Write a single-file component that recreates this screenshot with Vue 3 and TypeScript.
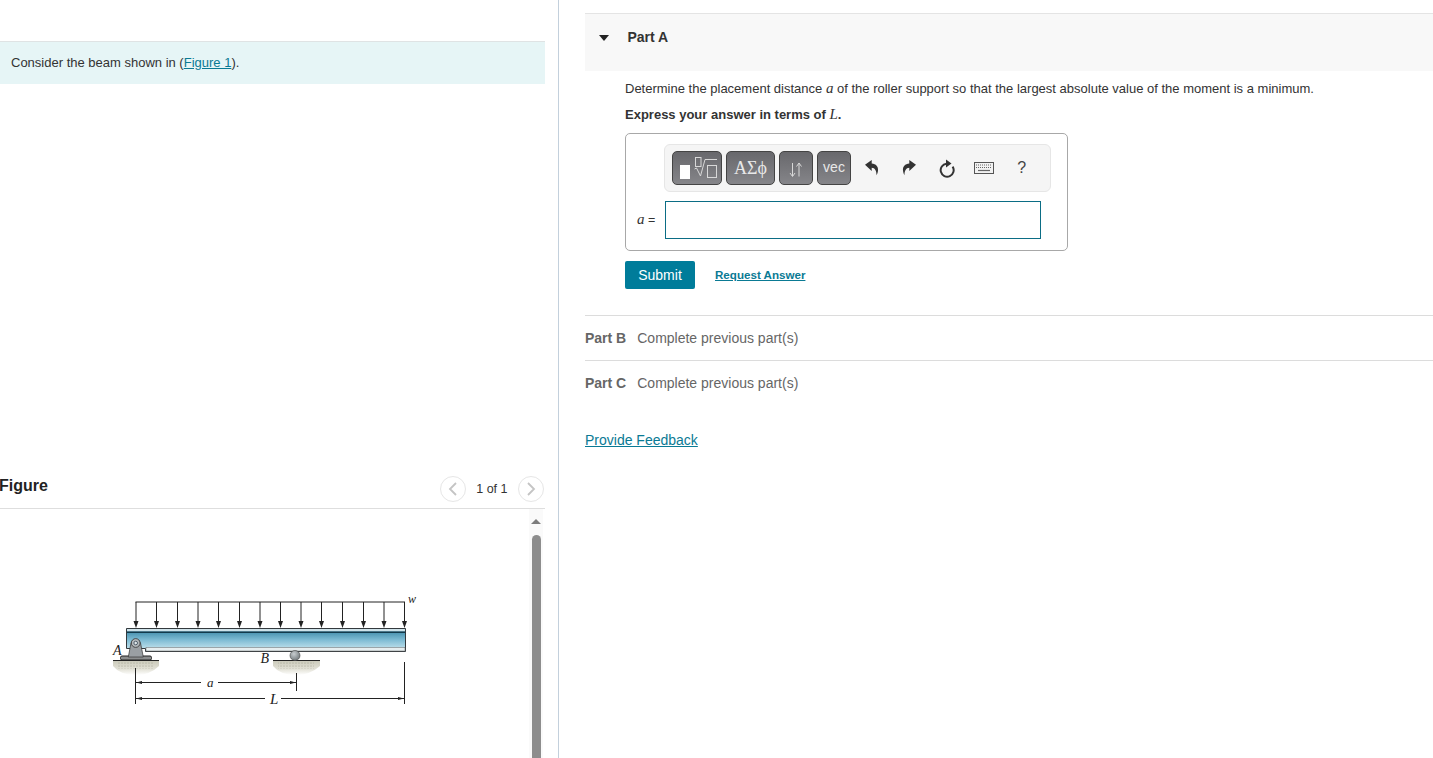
<template>
  <div class="page">
    <!-- Left column -->
    <aside class="left">
      <div class="intro">
        Consider the beam shown in (<a href="#" class="link">Figure 1</a>).
      </div>

      <div class="figure-head">
        <h2>Figure</h2>
        <div class="pager">
          <button class="round">
            <svg width="10" height="14" viewBox="0 0 10 14"><path d="M8 1 L2 7 L8 13" /></svg>
          </button>
          <span>1 of 1</span>
          <button class="round">
            <svg width="10" height="14" viewBox="0 0 10 14"><path d="M2 1 L8 7 L2 13" /></svg>
          </button>
        </div>
      </div>

      <div class="figure-body">
        <div class="figure-pic">
          <svg width="320" height="120" viewBox="0 0 320 120">
            <defs>
              <linearGradient id="beamFill" x1="0" y1="0" x2="0" y2="1">
                <stop offset="0" stop-color="#2f7f9f" />
                <stop offset="0.5" stop-color="#7fbcd4" />
                <stop offset="1" stop-color="#d3ecf3" />
              </linearGradient>
              <radialGradient id="ballFill" cx="0.4" cy="0.35" r="0.7">
                <stop offset="0" stop-color="#c8cdd0" />
                <stop offset="1" stop-color="#6f7679" />
              </radialGradient>
              <linearGradient id="groundFill" x1="0" y1="0" x2="0" y2="1">
                <stop offset="0" stop-color="#c9c8b8" />
                <stop offset="0.6" stop-color="#e2e1d6" />
                <stop offset="1" stop-color="#ffffff" />
              </linearGradient>
              <pattern id="stipple" width="3" height="3" patternUnits="userSpaceOnUse">
                <circle cx="1" cy="1" r="0.5" fill="#8f8e80" />
              </pattern>
            </defs>

            <!-- distributed load -->
            <line x1="35.5" y1="12" x2="305" y2="12" class="thin" />
            <g v-for="x in arrows" :key="x">
              <line :x1="x" y1="12" :x2="x" y2="34" class="thin" />
              <path :d="`M${x - 2.5} 31 L${x + 2.5} 31 L${x} 38 Z`" fill="#222" />
            </g>

            <!-- ground -->
            <path d="M13 70 H59 V76 Q50 85 36 85 Q20 85 13 76 Z" fill="url(#groundFill)" />
            <path d="M173 70 H220 V76 Q210 85 196 85 Q180 85 173 76 Z" fill="url(#groundFill)" />
            <rect x="18" y="72" width="36" height="7" fill="url(#stipple)" />
            <rect x="178" y="72" width="36" height="7" fill="url(#stipple)" />
            <line x1="13" y1="70.5" x2="59" y2="70.5" class="mid" />
            <line x1="173" y1="70.5" x2="220" y2="70.5" class="mid" />

            <!-- beam -->
            <path d="M26.5 38.5 H305.5 V61.5 H45.5 V58.5 H26.5 Z" fill="url(#beamFill)" stroke="#33393d" />
            <rect x="27" y="39" width="278" height="2.5" fill="#cfe3ea" />
            <rect x="27" y="41.5" width="278" height="1.5" fill="#123a4c" />
            <rect x="46" y="57.5" width="259" height="3.5" fill="#e6eef0" stroke="#666" stroke-width="0.5" />

            <!-- pin A -->
            <rect x="20.5" y="66" width="31" height="4" rx="1.5" fill="#8b8d8e" stroke="#222" stroke-width="1" />
            <path d="M28.3 67 L31 53 A5 5 0 0 1 40.5 53 L43.3 67 Z" fill="#9a9fa3" stroke="#333" stroke-width="0.7" />
            <circle cx="35.7" cy="53" r="4.4" fill="#b2b7ba" stroke="#333" stroke-width="0.8" />
            <circle cx="35.7" cy="53" r="1.8" fill="#dfe7ea" stroke="#234" stroke-width="0.7" />

            <!-- roller B -->
            <circle cx="195" cy="65.5" r="5" fill="url(#ballFill)" stroke="#444" stroke-width="0.6" />

            <!-- dimensions -->
            <line x1="35.5" y1="78" x2="35.5" y2="114" class="thin" />
            <line x1="196.5" y1="83" x2="196.5" y2="101" class="thin" />
            <line x1="304.5" y1="72" x2="304.5" y2="114" class="thin" />

            <line x1="36" y1="92.5" x2="101" y2="92.5" class="thin" />
            <line x1="118" y1="92.5" x2="196" y2="92.5" class="thin" />
            <path d="M36 92.5 L42 91 V94 Z M196 92.5 L190 91 V94 Z" fill="#222" />

            <line x1="36" y1="108.5" x2="165" y2="108.5" class="thin" />
            <line x1="181" y1="108.5" x2="304" y2="108.5" class="thin" />
            <path d="M36 108.5 L42 107 V110 Z M304 108.5 L298 107 V110 Z" fill="#222" />

            <text x="13" y="65" class="lbl">A</text>
            <text x="160.5" y="73" class="lbl">B</text>
            <text x="107" y="97" class="lbl mid-size">a</text>
            <text x="170" y="114" class="lbl big">L</text>
            <text x="308" y="13" class="lbl small">w</text>
          </svg>
        </div>
        <div class="scrollbar">
          <span class="scroll-up"></span>
          <span class="scroll-thumb"></span>
        </div>
      </div>
    </aside>

    <!-- Right column -->
    <main class="right">
      <section class="part-a">
        <header class="part-head">
          <span class="caret"></span>
          <span class="part-title">Part A</span>
        </header>

        <div class="part-body">
          <p class="question">
            Determine the placement distance <i class="math">a</i> of the roller support so that the largest absolute value of the moment is a minimum.
          </p>
          <p class="express">Express your answer in terms of <i class="math">L</i>.</p>

          <div class="answer">
            <div class="toolbar">
              <button class="tool tool-templates">
                <span class="solid"></span>
                <svg width="29" height="27" viewBox="0 0 29 27">
                  <rect x="3.5" y="2.5" width="5.5" height="9" class="ghost" />
                  <path d="M2.5 14 L4.5 13 L8.5 21 L13 4.5 H25" class="ghost" />
                  <rect x="15.5" y="10.5" width="9" height="12" class="ghost" />
                </svg>
              </button>
              <button class="tool tool-greek">ΑΣϕ</button>
              <button class="tool tool-arrows">
                <svg width="14" height="16" viewBox="0 0 14 16">
                  <path d="M3.5 1 V14 M1 11 L3.5 14.5 L6 11" class="ghost" />
                  <path d="M10 14.5 V1 M7.5 4.5 L10 1 L12.5 4.5" class="ghost" />
                </svg>
              </button>
              <button class="tool tool-vec">vec</button>

              <span class="action">
                <svg width="14" height="16" viewBox="0 0 14 16">
                  <path :d="undoPath" fill="#333" />
                </svg>
              </span>
              <span class="action">
                <svg width="14" height="16" viewBox="0 0 14 16">
                  <path :d="undoPath" fill="#333" transform="translate(14 0) scale(-1 1)" />
                </svg>
              </span>
              <span class="action">
                <svg width="18" height="20" viewBox="0 0 18 20">
                  <path d="M8.5 5.7 A6.5 6.5 0 1 0 14.6 8.6" fill="none" stroke="#333" stroke-width="2" />
                  <path d="M8 1.5 V9.5 L13.5 5.5 Z" fill="#333" />
                </svg>
              </span>
              <span class="action">
                <svg width="20" height="12" viewBox="0 0 20 12">
                  <rect x="0.5" y="0.5" width="19" height="11" fill="#f2f2f2" stroke="#555" />
                  <path d="M2 3 H18 M2 5.5 H18" stroke="#666" stroke-width="1.2" stroke-dasharray="1 1" />
                  <path d="M4 8.5 H16" stroke="#666" stroke-width="1.2" />
                </svg>
              </span>
              <span class="action help">?</span>
            </div>

            <div class="answer-row">
              <span class="answer-label"><i class="math">a</i> =</span>
              <input class="answer-input" type="text" />
            </div>
          </div>

          <div class="actions">
            <button class="submit">Submit</button>
            <a href="#" class="link request">Request Answer</a>
          </div>
        </div>
      </section>

      <div v-for="p in lockedParts" :key="p" class="locked">
        <strong>{{ p }}</strong>
        <span>Complete previous part(s)</span>
      </div>

      <a href="#" class="link feedback">Provide Feedback</a>
    </main>
  </div>
</template>

<script setup lang="ts">
// Load arrows along the beam
const arrows: number[] = [36, 56.5, 77.5, 98, 118.5, 139.5, 160, 180.5, 201, 221.5, 242.5, 263.5, 284, 304.5];

const lockedParts: string[] = ['Part B', 'Part C'];

// Same outline for undo and (mirrored) redo
const undoPath = 'M0 4.7 L6.7 0 V3.4 C11 3.6 13.5 6.5 13 10.5 C12.8 12.5 12.2 14 11.5 15.2 C11.6 11 10 7.8 6.7 7.8 V11 Z';
</script>

<style>
html,
body {
  margin: 0;
  overflow: hidden;
  background: #fff;
}
</style>

<style scoped>
.page {
  display: flex;
  width: 1433px;
  height: 758px;
  overflow: hidden;
  font-family: "Liberation Sans", Arial, sans-serif;
  font-size: 13px;
  color: #333;
}

.left {
  flex: none;
  width: 559px;
  height: 758px;
  padding-top: 41px;
  box-sizing: border-box;
  border-right: 1px solid #c3d0dc;
}

.intro {
  width: 545px;
  height: 43px;
  box-sizing: border-box;
  padding: 13px 0 0 11px;
  line-height: 16px;
  background: #e6f5f6;
  border-top: 1px solid #dfe3e4;
}

.link {
  color: #0a7a94;
  text-decoration: underline;
}

.figure-head {
  width: 545px;
  height: 34px;
  box-sizing: border-box;
  margin-top: 391px;
  display: flex;
  justify-content: space-between;
  align-items: flex-start;
  border-bottom: 1px solid #dedede;
}

.figure-head h2 {
  margin: 2px 0 0 -1px;
  font-size: 16px;
  line-height: 18px;
  font-weight: bold;
  color: #222;
}

.pager {
  display: flex;
  align-items: center;
  gap: 10.5px;
  margin: 1px 1px 0 0;
  font-size: 12.5px;
  color: #333;
}

.round {
  width: 26px;
  height: 26px;
  padding: 0;
  border: 1px solid #e6e6e6;
  border-radius: 50%;
  background: #fff;
  display: flex;
  align-items: center;
  justify-content: center;
}

.round svg path {
  fill: none;
  stroke: #c4c4c4;
  stroke-width: 1.8;
}

.figure-body {
  width: 545px;
  display: flex;
  justify-content: space-between;
}

.figure-pic {
  padding: 81px 0 0 100px;
}

.figure-pic svg {
  display: block;
}

.thin {
  stroke: #222;
  stroke-width: 1;
}

.mid {
  stroke: #222;
  stroke-width: 1;
}

.lbl {
  font-family: "Liberation Serif", serif;
  font-style: italic;
  font-size: 14px;
  fill: #222;
}

.lbl.big {
  font-size: 15px;
}

.lbl.mid-size {
  font-size: 13px;
}

.lbl.small {
  font-size: 12px;
}

.scrollbar {
  width: 14px;
  height: 249px;
  box-sizing: border-box;
  margin-right: 2px;
  padding-top: 10px;
  background: #fafafa;
  display: flex;
  flex-direction: column;
  align-items: center;
}

.scroll-up {
  width: 0;
  height: 0;
  border-left: 5px solid transparent;
  border-right: 5px solid transparent;
  border-bottom: 5px solid #7d7d7d;
}

.scroll-thumb {
  width: 9px;
  flex: 1;
  margin-top: 11px;
  background: #8d8d8d;
  border-radius: 5px 5px 0 0;
}

.right {
  flex: 1;
  min-width: 0;
  padding: 13px 0 0 26px;
}

.part-head {
  display: flex;
  align-items: flex-start;
  height: 58px;
  box-sizing: border-box;
  padding-top: 15px;
  background: #f8f8f8;
  border-top: 1px solid #e4e4e4;
}

.caret {
  width: 0;
  height: 0;
  margin: 6px 0 0 14px;
  border-left: 5.5px solid transparent;
  border-right: 5.5px solid transparent;
  border-top: 6px solid #222;
}

.part-title {
  margin-left: 18.5px;
  font-weight: bold;
  font-size: 14px;
  line-height: 16px;
  color: #333;
}

.part-body {
  padding: 10px 0 0 40px;
}

.question,
.express {
  margin: 0;
  line-height: 16px;
}

.express {
  margin-top: 10px;
  font-weight: bold;
}

.math {
  font-family: "Liberation Serif", serif;
  font-size: 15px;
  font-style: italic;
  font-weight: normal;
  line-height: 0;
}

.answer {
  width: 443px;
  height: 118px;
  box-sizing: border-box;
  margin-top: 10px;
  padding: 10px 0 0 38px;
  border: 1px solid #a8a8a8;
  border-radius: 5px;
}

.toolbar {
  width: 387px;
  height: 48px;
  box-sizing: border-box;
  display: flex;
  align-items: center;
  padding-left: 7px;
  gap: 4px;
  background: #f5f5f5;
  border: 1px solid #e6e6e6;
  border-radius: 6px;
}

.tool {
  flex: none;
  height: 34px;
  padding: 0;
  box-sizing: border-box;
  display: flex;
  align-items: center;
  justify-content: center;
  color: #fff;
  background: linear-gradient(#68686c, #858589);
  border: 1px solid #444;
  border-radius: 5px;
}

.tool-templates {
  width: 50px;
  justify-content: flex-start;
  padding-left: 7px;
  gap: 2px;
}

.solid {
  width: 10px;
  height: 14px;
  margin-top: 7px;
  background: #fff;
}

.ghost {
  fill: none;
  stroke: #d8d8d8;
  stroke-width: 1;
}

.tool-greek {
  width: 49px;
  font-family: "Liberation Serif", serif;
  font-size: 18px;
  color: #e8e8e8;
}

.tool-arrows {
  width: 34px;
  padding-top: 3px;
}

.tool-vec {
  width: 34px;
  font-family: "Liberation Sans", sans-serif;
  font-size: 14px;
  color: #e8e8e8;
  padding-bottom: 3px;
}

.action {
  flex: none;
  width: 33.5px;
  display: flex;
  justify-content: center;
  align-items: center;
}

.help {
  font-size: 16px;
  color: #444;
}

.answer-row {
  display: flex;
  align-items: center;
  margin-top: 9px;
  margin-left: -27px;
}

.answer-label {
  width: 28px;
  flex: none;
  font-size: 12.5px;
}

.answer-input {
  width: 376px;
  height: 38px;
  box-sizing: border-box;
  margin: 0;
  padding: 0 6px;
  background: #fff;
  border: 1px solid #0b6d85;
  outline: none;
}

.actions {
  display: flex;
  align-items: center;
  gap: 20px;
  margin-top: 10px;
}

.submit {
  width: 70px;
  height: 28px;
  padding: 0;
  font-family: inherit;
  font-size: 14px;
  color: #fff;
  background: #007c9a;
  border: none;
  border-radius: 2px;
}

.request {
  margin-top: -2px;
  font-size: 11.6px;
  font-weight: bold;
}

.locked {
  height: 45px;
  box-sizing: border-box;
  padding-top: 14px;
  border-top: 1px solid #dcdcdc;
  line-height: 16px;
  font-size: 14px;
  color: #666;
  display: flex;
  gap: 11px;
}

.locked:first-of-type {
  margin-top: 26px;
}

.locked strong {
  color: #666;
}

.feedback {
  display: inline-block;
  margin-top: 27px;
  font-size: 14px;
  line-height: 16px;
}
</style>
